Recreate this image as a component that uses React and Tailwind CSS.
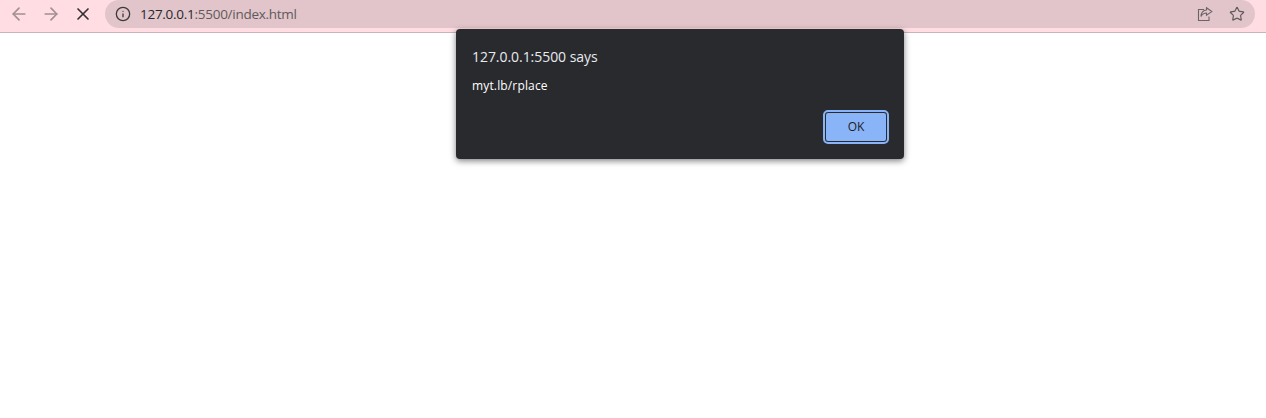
import React from "react";
import { ArrowLeft, ArrowRight, X, Info, Star } from "lucide-react";

// Chrome's share icon, box with an arrow coming out of it
function ShareIcon() {
  return (
    <svg width="16" height="16" viewBox="0 0 16 16" fill="none" stroke="#6b6467" strokeWidth="1.1">
      <path d="M7 3.5H1.5V14.5H12V10.5" />
      <path d="M9.5 1.8L14.8 5.6L9.5 9.2V7C7 7 5.2 8 4 10.5C4.2 7 6.2 4.2 9.5 4Z" />
    </svg>
  );
}

// Top browser bar
function Toolbar() {
  return (
    <div className="h-[33px] bg-[#ffdde2] border-b border-[#c9b4ba] flex items-start">
      <div className="w-[105px] h-[28px] flex items-center shrink-0">
        <ArrowLeft className="w-[20px] h-[20px] ml-[9px] text-[#a08f93]" strokeWidth={2} />
        <ArrowRight className="w-[20px] h-[20px] ml-[12px] text-[#a08f93]" strokeWidth={2} />
        <X className="w-[20px] h-[20px] ml-[12px] text-[#333033]" strokeWidth={2} />
      </div>
      <div className="w-[1150px] h-[28px] bg-[#e2c5ca] rounded-r-full rounded-l-full flex items-center pl-[10px] pr-[10px]">
        <Info className="w-[16px] h-[16px] text-[#3d3a3c]" strokeWidth={2} />
        <div className="ml-[9px] text-[13.5px] text-[#5f5a5c] font-['Open_Sans',sans-serif] tracking-[-0.27px]">
          <span className="text-[#26282b]">127.0.0.1</span>:5500/index.html
        </div>
        <div className="ml-auto flex items-center gap-[16px]">
          <ShareIcon />
          <Star className="w-[16px] h-[16px] text-[#5f5a5c]" strokeWidth={1.75} />
        </div>
      </div>
    </div>
  );
}

// Alert dialog
function AlertBox() {
  return (
    <div className="absolute left-[456px] top-[29px] w-[448px] h-[130px] bg-[#292a2d] rounded-[4px] shadow-[0_2px_6px_rgba(0,0,0,0.5)] px-[16px] pt-[16px] font-['Open_Sans',sans-serif] text-white">
      <p className="text-[14px] leading-[24px] tracking-[-0.05px] text-[#e8eaed]">127.0.0.1:5500 says</p>
      <p className="text-[12px] leading-[16px] mt-[9px] tracking-[0.15px]">myt.lb/rplace</p>
      <div className="flex justify-end mt-[18px] pr-[1px]">
        <button className="w-[62px] h-[30px] bg-[#8ab4f8] rounded-[3px] border border-[#292a2d] outline-2 outline-[#8ab4f8] text-[12px] text-[#202124] flex items-center justify-center">
          OK
        </button>
      </div>
    </div>
  );
}

export default function App() {
  return (
    <div className="relative w-[1266px] h-[418px] bg-white overflow-hidden">
      <Toolbar />
      <AlertBox />
    </div>
  );
}
